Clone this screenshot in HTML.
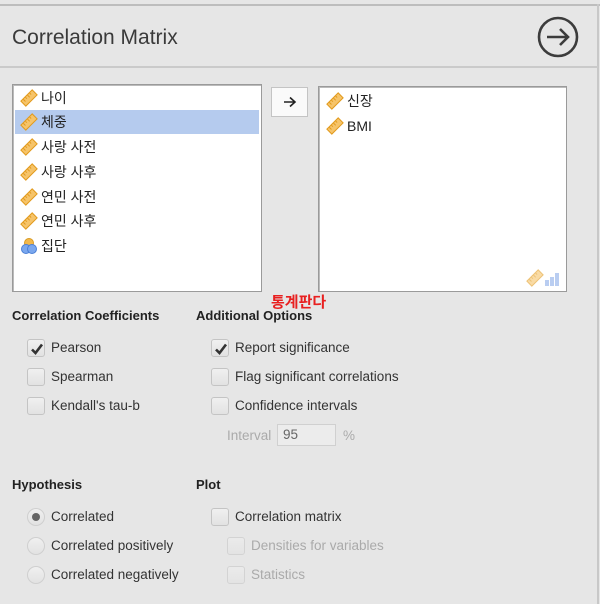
<!DOCTYPE html>
<html><head><meta charset="utf-8"><style>
*{margin:0;padding:0;box-sizing:border-box}
body{width:600px;height:603px;background:#e6e6e6;position:relative;overflow:hidden;font-family:"Liberation Sans","Noto Sans CJK KR",sans-serif;font-size:13px;color:#333}
.a{position:absolute;white-space:nowrap}
.box{position:absolute;background:#fff;border:1px solid #9a9a9a;box-shadow:inset 1px 1px 0 #bbb}
.row{position:absolute;left:2px;right:2px;height:24px;line-height:24px;padding-left:26px;font-size:14px;color:#222}
.row svg{position:absolute;left:5px;top:3px}
.sel{background:#b5cbee}
.h{font-weight:bold;font-size:13px;color:#222}
.cb{position:absolute;width:18px;height:18px;border:1px solid #c4c4c4;border-radius:3px;background:linear-gradient(#f0f0f0,#e2e2e2)}
.cb.d{opacity:.55}
.rd{position:absolute;width:18px;height:18px;border:1px solid #cfcfcf;border-radius:50%;background:linear-gradient(#f0f0f0,#e2e2e2)}
.lbl{position:absolute;font-size:13.5px;color:#333;white-space:nowrap}
.dis{color:#aaa}
</style></head><body>
<div class="a" style="left:0;top:4px;width:600px;height:2px;background:#bdbdbd"></div>
<div class="a" style="left:597px;top:4px;width:2px;height:600px;background:#c8c8c8"></div>
<div class="a" style="left:0;top:66px;width:598px;height:2px;background:#cacaca"></div>
<div class="a" style="left:12px;top:26px;font-size:21px;color:#3a3a3a">Correlation Matrix</div>
<svg class="a" style="left:537px;top:16px" width="42" height="42" viewBox="0 0 42 42"><circle cx="21" cy="21" r="19" fill="none" stroke="#3c3c3c" stroke-width="2.6"/><path d="M10 21H31M23 13L31 21L23 29" fill="none" stroke="#3c3c3c" stroke-width="2.6"/></svg>

<svg width="0" height="0" style="position:absolute"><defs><g id="r"><g transform="rotate(-45 9 9)"><rect x="1" y="5.5" width="16" height="7" fill="#f6c46a" stroke="#e29a1c" stroke-width="1"/><path d="M4 6v3M7 6v2M10 6v3M13 6v2" stroke="#e29a1c" stroke-width="1"/></g></g>
<path id="ck" d="M4 9.5L7.5 13L14 4.5" fill="none" stroke="#333" stroke-width="2.6"/></defs></svg>

<div class="box" style="left:12px;top:84px;width:250px;height:208px">
<div class="row" style="top:1px"><svg width="18" height="18"><use href="#r"/></svg>나이</div>
<div class="row sel" style="top:25px"><svg width="18" height="18"><use href="#r"/></svg>체중</div>
<div class="row" style="top:50px"><svg width="18" height="18"><use href="#r"/></svg>사랑 사전</div>
<div class="row" style="top:75px"><svg width="18" height="18"><use href="#r"/></svg>사랑 사후</div>
<div class="row" style="top:100px"><svg width="18" height="18"><use href="#r"/></svg>연민 사전</div>
<div class="row" style="top:124px"><svg width="18" height="18"><use href="#r"/></svg>연민 사후</div>
<div class="row" style="top:149px"><svg width="18" height="18"><circle cx="9" cy="6" r="4.5" fill="#f2b84b" stroke="#d99a22"/><circle cx="6" cy="12" r="4.5" fill="#7aa7ee" stroke="#4a7fd6"/><circle cx="12" cy="12" r="4.5" fill="#7aa7ee" stroke="#4a7fd6"/></svg>집단</div>
</div>
<div class="a" style="left:271px;top:87px;width:37px;height:30px;background:#fafafa;border:1px solid #c4c4c4"><svg style="position:absolute;left:11px;top:8px" width="14" height="12"><path d="M1 6H12M7 1.5L12 6L7 10.5" fill="none" stroke="#222" stroke-width="1.6"/></svg></div>
<div class="box" style="left:318px;top:86px;width:249px;height:206px">
<div class="row" style="top:2px"><svg width="18" height="18"><use href="#r"/></svg>신장</div>
<div class="row" style="top:27px"><svg width="18" height="18"><use href="#r"/></svg>BMI</div>
<svg class="a" style="left:207px;top:182px;opacity:.6" width="18" height="18"><use href="#r"/></svg>
<svg class="a" style="left:226px;top:184px" width="16" height="16"><rect x="0" y="9" width="4" height="6" fill="#b9cdf1"/><rect x="5" y="6" width="4" height="9" fill="#b9cdf1"/><rect x="10" y="2" width="4" height="13" fill="#b9cdf1"/></svg>
</div>
<div class="a" style="left:271px;top:291px;color:#e82020;font-size:15px;font-weight:bold">통계판다</div>

<div class="a h" style="left:12px;top:308px">Correlation Coefficients</div>
<div class="a h" style="left:196px;top:308px">Additional Options</div>
<div class="cb" style="left:27px;top:339px"><svg width="16" height="16" style="position:absolute;left:0;top:0"><use href="#ck"/></svg></div><div class="lbl" style="left:51px;top:340px">Pearson</div>
<div class="cb" style="left:27px;top:368px"></div><div class="lbl" style="left:51px;top:369px">Spearman</div>
<div class="cb" style="left:27px;top:397px"></div><div class="lbl" style="left:51px;top:398px">Kendall's tau-b</div>
<div class="cb" style="left:211px;top:339px"><svg width="16" height="16" style="position:absolute;left:0;top:0"><use href="#ck"/></svg></div><div class="lbl" style="left:235px;top:340px">Report significance</div>
<div class="cb" style="left:211px;top:368px"></div><div class="lbl" style="left:235px;top:369px">Flag significant correlations</div>
<div class="cb" style="left:211px;top:397px"></div><div class="lbl" style="left:235px;top:398px">Confidence intervals</div>
<div class="lbl dis" style="left:227px;top:428px">Interval</div>
<div class="a" style="left:277px;top:424px;width:59px;height:22px;border:1px solid #d0d0d0;background:#ececec;color:#666;padding-left:5px;line-height:20px;font-size:13.5px">95</div>
<div class="lbl dis" style="left:343px;top:428px">%</div>

<div class="a h" style="left:12px;top:477px">Hypothesis</div>
<div class="a h" style="left:196px;top:477px">Plot</div>
<div class="rd" style="left:27px;top:508px"></div><div class="a" style="left:32px;top:513px;width:8px;height:8px;border-radius:50%;background:#666"></div><div class="lbl" style="left:51px;top:509px">Correlated</div>
<div class="rd" style="left:27px;top:537px"></div><div class="lbl" style="left:51px;top:538px">Correlated positively</div>
<div class="rd" style="left:27px;top:566px"></div><div class="lbl" style="left:51px;top:567px">Correlated negatively</div>
<div class="cb" style="left:211px;top:508px"></div><div class="lbl" style="left:235px;top:509px">Correlation matrix</div>
<div class="cb d" style="left:227px;top:537px"></div><div class="lbl dis" style="left:251px;top:538px">Densities for variables</div>
<div class="cb d" style="left:227px;top:566px"></div><div class="lbl dis" style="left:251px;top:567px">Statistics</div>
</body></html>
